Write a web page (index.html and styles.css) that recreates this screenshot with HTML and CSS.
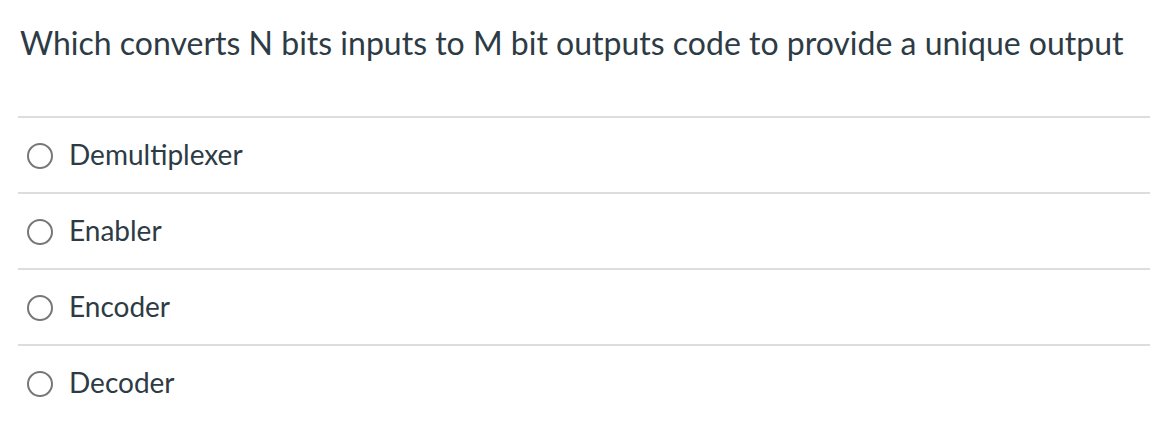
FILE: index.html
```
<!DOCTYPE html>
<html>
<head>
<meta charset="utf-8">
<link rel="stylesheet" href="styles.css">
</head>
<body>
<div class="quiz">
  <div class="question">Which converts N bits inputs to M bit outputs code to provide a unique output</div>
  <div class="answers">
    <label class="answer"><span class="radio"></span><span class="label">Demultiplexer</span></label>
    <label class="answer"><span class="radio"></span><span class="label">Enabler</span></label>
    <label class="answer"><span class="radio"></span><span class="label">Encoder</span></label>
    <label class="answer"><span class="radio"></span><span class="label">Decoder</span></label>
  </div>
</div>
</body>
</html>
```
FILE: styles.css
```
html, body {
  margin: 0;
  padding: 0;
  background: #fff;
}
body {
  font-family: Lato, "Open Sans", sans-serif;
  color: #2d3b45;
}
.quiz {
  padding-left: 18px;
}
.question {
  font-size: 32px;
  line-height: 38px;
  padding: 24px 0 0 2px;
  height: 116px;
  box-sizing: border-box;
}
.answer {
  display: flex;
  align-items: center;
  height: 76px;
  border-top: 2px solid #dddddd;
  box-sizing: border-box;
}
.radio {
  width: 22px;
  height: 22px;
  border: 2px solid #777;
  border-radius: 50%;
  margin-left: 9px;
  margin-right: 16px;
  margin-top: 2px;
  flex: none;
}
.label {
  font-size: 28px;
  line-height: 34px;
  margin-bottom: 3px;
}
```
